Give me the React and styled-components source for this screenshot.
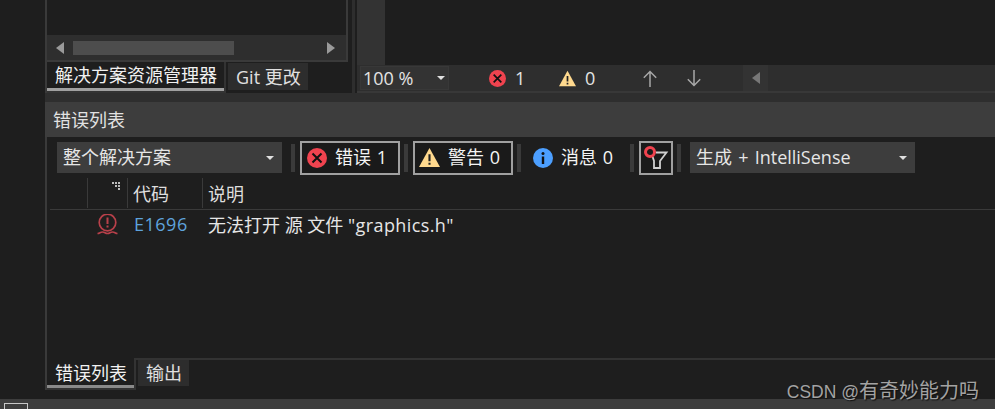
import React from "react";
import styled, { createGlobalStyle } from "styled-components";

const FONT = `"Open Sans", "Noto Sans CJK SC", sans-serif`;

const GlobalStyle = createGlobalStyle`
  html, body { margin: 0; padding: 0; background: #1e1e1e; overflow: hidden; }
  body { font-family: ${FONT}; font-size: 18px; color: #e4e4e4; }
`;

const Page = styled.div`
  position: relative;
  width: 995px;
  height: 409px;
  display: flex;
  flex-direction: column;
  overflow: hidden;
`;

const Workspace = styled.div`
  display: flex;
  flex-direction: column;
  height: 399px;
  margin-left: 45px;
`;

const TopArea = styled.div`
  display: flex;
  height: 93px;
  background: #1e1e1e;
  border-left: 2px solid #3a3a3a;
`;

const ExplorerColumn = styled.div`
  width: 305px;
  display: flex;
  flex-direction: column;
`;

const ExplorerPane = styled.div`
  height: 62px;
  width: 301px;
  box-sizing: border-box;
  border-right: 2px solid #3a3a3a;
  border-bottom: 2px solid #3a3a3a;
  display: flex;
  flex-direction: column;
  justify-content: flex-end;
`;

const HScroll = styled.div`
  height: 25px;
  background: #2e2e2e;
  display: flex;
  align-items: center;
  padding: 0 11px 0 9px;
  gap: 9px;
`;

const Thumb = styled.div`
  width: 161px;
  height: 14px;
  background: #4d4d4d;
`;

const Spacer = styled.div`
  flex: 1;
`;

const ArrowLeft = styled.div`
  width: 0;
  height: 0;
  border-top: 6.5px solid transparent;
  border-bottom: 6.5px solid transparent;
  border-right: 8px solid ${p => p.color || "#9a9a9a"};
`;

const ArrowRight = styled.div`
  width: 0;
  height: 0;
  border-top: 6.5px solid transparent;
  border-bottom: 6.5px solid transparent;
  border-left: 8px solid #9a9a9a;
`;

const TabRow = styled.div`
  height: ${p => p.height}px;
  display: flex;
  align-items: flex-start;
`;

const TabBox = styled.div`
  width: ${p => p.width}px;
  height: 100%;
  box-sizing: border-box;
  border-right: 2px solid #333333;
  border-bottom: 2px solid #333333;
`;

const ActiveTab = styled.div`
  height: ${p => p.height}px;
  box-sizing: border-box;
  border-bottom: 3px solid ${p => p.line};
  padding: ${p => p.top}px 0 0 8px;
  line-height: 25px;
  color: #f1f1f1;
  white-space: nowrap;
`;

const IdleTab = styled.div`
  margin: ${p => p.top}px 0 0 ${p => p.left}px;
  height: ${p => p.height}px;
  padding: 0 ${p => p.pad}px 0 8px;
  background: #2d2d2d;
  line-height: ${p => p.height + 1}px;
  color: #e0e0e0;
  white-space: nowrap;
`;

const Splitter = styled.div`
  width: 3px;
  background: #2e2e2e;
  margin-right: 2px;
`;

const EditorColumn = styled.div`
  flex: 1;
  display: flex;
  flex-direction: column;
  background: #2e2e2e;
`;

const EditorBody = styled.div`
  height: 65px;
  display: flex;
`;

const Margin = styled.div`
  width: 28px;
  background: #333333;
`;

const Code = styled.div`
  flex: 1;
  background: #1e1e1e;
`;

const EditorStatus = styled.div`
  height: 28px;
  box-sizing: border-box;
  display: flex;
  align-items: center;
  background: #2e2e2e;
  border-bottom: 2px solid #383838;
`;

const ZoomBox = styled.div`
  width: 89px;
  height: 24px;
  margin: 0 40px 0 3px;
  box-sizing: border-box;
  border: 1px solid #383838;
  background: #333333;
  display: flex;
  align-items: center;
  justify-content: space-between;
  padding: 0 3px 0 2px;
  font-size: 18px;
`;

const Caret = styled.div`
  width: 0;
  height: 0;
  border-left: 4.5px solid transparent;
  border-right: 4.5px solid transparent;
  border-top: 4.5px solid #e0e0e0;
`;

const Counter = styled.div`
  width: ${p => p.width}px;
  display: flex;
  align-items: center;
  gap: 9px;
  font-size: 18px;
`;

const ArrowSlot = styled.div`
  width: ${p => p.width}px;
  display: flex;
  align-items: center;
`;

const ScrollEnd = styled.div`
  width: 25px;
  height: 26px;
  background: #333333;
  display: flex;
  align-items: center;
  justify-content: center;
`;

const Band = styled.div`
  height: 9px;
  background: #2e2e2e;
`;

const PanelHead = styled.div`
  height: 35px;
  box-sizing: border-box;
  background: #3d3d3d;
  padding: 2px 0 0 8px;
  line-height: 33px;
  color: #e2e2e2;
`;

const PanelBody = styled.div`
  height: 253px;
  box-sizing: border-box;
  border-left: 2px solid #3a3a3a;
  display: flex;
  flex-direction: column;
`;

const Toolbar = styled.div`
  height: 41px;
  display: flex;
  align-items: center;
  padding-left: 10px;
`;

const Combo = styled.div`
  width: 225px;
  height: 31px;
  box-sizing: border-box;
  background: #3d3d3d;
  display: flex;
  align-items: center;
  justify-content: space-between;
  padding: 0 7px 3px 6px;
  color: #e6e6e6;
  white-space: nowrap;
  word-spacing: 1.5px;
`;

const ComboCaret = styled(Caret)`
  margin: 3px 1px 0 0;
`;

const Sep = styled.div`
  width: 4px;
  height: 28px;
  margin: 0 ${p => p.right}px 0 ${p => p.left}px;
  background: #3a3a3a;
`;

const FilterButton = styled.div`
  width: ${p => p.width}px;
  height: 34px;
  box-sizing: border-box;
  border: 2px solid ${p => (p.on ? "#a0a0a0" : "transparent")};
  background: ${p => (p.on ? "#1a1a1a" : "transparent")};
  display: flex;
  align-items: center;
  gap: 8px;
  padding-left: ${p => p.lead}px;
  color: #f4f4f4;
  white-space: nowrap;
`;

const ButtonLabel = styled.span`
  margin-top: -3px;
  word-spacing: 1px;
`;

const TableHead = styled.div`
  height: 32px;
  box-sizing: border-box;
  margin-left: 3px;
  display: flex;
  border-bottom: 1px solid #3a3a3a;
`;

const HeadCell = styled.div`
  width: ${p => p.width}px;
  height: 30px;
  flex: ${p => (p.grow ? 1 : "none")};
  box-sizing: border-box;
  border-left: ${p => (p.first ? "none" : "1px solid #3a3a3a")};
  padding-left: 5px;
  line-height: 32px;
  color: #dedede;
  position: relative;
`;

const SortGrip = styled.svg`
  position: absolute;
  right: 5px;
  top: 4px;
`;

const Row = styled.div`
  height: 29px;
  margin-left: 3px;
  display: flex;
  align-items: center;
`;

const RowIcon = styled.div`
  width: 84px;
  display: flex;
  padding-left: 47px;
  box-sizing: border-box;
`;

const RowCode = styled.div`
  width: 74px;
  margin-top: -2px;
  color: #5ea3dc;
  letter-spacing: 0.5px;
`;

const RowText = styled.div`
  margin-top: -2px;
  color: #e6e6e6;
  white-space: nowrap;
`;

const FileName = styled.span`
  letter-spacing: 0.4px;
`;

const BottomTabs = styled(TabRow)`
  margin-top: auto;
`;

const BottomRest = styled.div`
  flex: 1;
  height: 100%;
  margin-left: -2px;
  display: flex;
  align-items: flex-start;
  border-top: 2px solid #333333;
`;

const StatusBar = styled.div`
  height: 10px;
  background: #3d3d3d;
  padding-left: 4px;
`;

const StatusBox = styled.div`
  width: 24px;
  height: 6px;
  margin-top: 4px;
  box-sizing: border-box;
  border: 1px solid #c8c8c8;
  border-bottom: none;
`;

const Watermark = styled.div`
  position: absolute;
  right: 16px;
  top: 375px;
  font-family: "Liberation Sans", "Noto Sans CJK SC", sans-serif;
  font-size: 17.5px;
  color: #a3a3a3;
  text-shadow: 1px 1px 1px #111;
  white-space: nowrap;
`;

const WatermarkName = styled.span`
  font-size: 20px;
`;

const ErrorDot = ({ size = 20 }) => (
  <svg width={size} height={size} viewBox="0 0 20 20">
    <circle cx="10" cy="10" r="10" fill="#f0434f" />
    <path d="M5.500 5.500l9 9M14.500 5.500l-9 9" stroke="#111" strokeWidth="2" />
  </svg>
);

const WarnIcon = ({ size = 21 }) => (
  <svg width={size} height={size} viewBox="0 0 20 20">
    <path d="M10 1L20 19H0z" fill="#ffd98e" />
    <path d="M10 7v6.500M10 15v2" stroke="#222" strokeWidth="2" />
  </svg>
);

const InfoIcon = () => (
  <svg width="20" height="20" viewBox="0 0 20 20">
    <circle cx="10" cy="10" r="10" fill="#4c9fff" />
    <circle cx="10" cy="5.600" r="1.500" fill="#111" />
    <path d="M10 8.500v7.500" stroke="#111" strokeWidth="2.400" />
  </svg>
);

const FunnelIcon = () => (
  <svg width="30" height="30" viewBox="0 0 30 30">
    <path d="M15 9.500H25.500L19 18V25H13V18L11.500 13.500" fill="none" stroke="#d0d0d0" strokeWidth="1.800" />
    <circle cx="9" cy="9" r="4.500" fill="#1a1a1a" stroke="#f0434f" strokeWidth="3" />
  </svg>
);

const UpArrow = () => (
  <svg width="14" height="17" viewBox="0 0 14 17">
    <path d="M7 17V1.500M.8 7.700L7 1.500l6.200 6.200" fill="none" stroke="#a8a8a8" strokeWidth="1.500" />
  </svg>
);

const DownArrow = () => (
  <svg width="14" height="17" viewBox="0 0 14 17">
    <path d="M7 0v15.500M.8 9.300L7 15.500l6.200-6.200" fill="none" stroke="#a8a8a8" strokeWidth="1.500" />
  </svg>
);

const RowError = () => (
  <svg width="21" height="21" viewBox="0 0 21 21">
    <circle cx="10.500" cy="8.500" r="8.300" fill="none" stroke="#b8404a" strokeWidth="1.700" />
    <path d="M10.500 3.500v6.500M10.500 11.500v2" stroke="#b8404a" strokeWidth="2" />
    <path d="M.5 19.500c2.500 0 2.500-1.500 5-1.500s2.500 1.500 5 1.500 2.500-1.500 5-1.500 2.500 1.500 5 1.500" fill="none" stroke="#b8404a" strokeWidth="1.600" />
  </svg>
);

const Grip = () => (
  <SortGrip width="10" height="10" viewBox="0 0 10 10">
    {[[0, 0], [3, 0], [6, 0], [3, 3], [6, 3], [6, 6]].map(([x, y]) => (
      <rect key={`${x}-${y}`} x={x} y={y} width="2" height="2" fill="#bdbdbd" />
    ))}
  </SortGrip>
);

export default function App() {
  return (
    <Page>
      <GlobalStyle />
      <Workspace>
        <TopArea>
          <ExplorerColumn>
            <ExplorerPane>
              <HScroll>
                <ArrowLeft />
                <Thumb />
                <Spacer />
                <ArrowRight />
              </HScroll>
            </ExplorerPane>
            <TabRow height={31}>
              <TabBox width={179}>
                <ActiveTab height={29} top={1} line="#a0a0a0">解决方案资源管理器</ActiveTab>
              </TabBox>
              <IdleTab top={1} left={2} height={27} pad={7}>Git 更改</IdleTab>
            </TabRow>
          </ExplorerColumn>
          <Splitter />
          <EditorColumn>
            <EditorBody>
              <Margin />
              <Code />
            </EditorBody>
            <EditorStatus>
              <ZoomBox>100 %<Caret /></ZoomBox>
              <Counter width={70}><ErrorDot size={17} />1</Counter>
              <Counter width={84}><WarnIcon size={17} />0</Counter>
              <ArrowSlot width={44}><UpArrow /></ArrowSlot>
              <ArrowSlot width={56}><DownArrow /></ArrowSlot>
              <ScrollEnd><ArrowLeft color="#777" /></ScrollEnd>
            </EditorStatus>
          </EditorColumn>
        </TopArea>
        <Band />
        <PanelHead>错误列表</PanelHead>
        <PanelBody>
          <Toolbar>
            <Combo>整个解决方案<ComboCaret /></Combo>
            <Sep left={9} right={5} />
            <FilterButton on="1" width={100} lead={5}><ErrorDot /><ButtonLabel>错误 1</ButtonLabel></FilterButton>
            <Sep left={4} right={5} />
            <FilterButton on="1" width={100} lead={4}><WarnIcon /><ButtonLabel>警告 0</ButtonLabel></FilterButton>
            <Sep left={4} right={0} />
            <FilterButton width={105} lead={10}><InfoIcon /><ButtonLabel>消息 0</ButtonLabel></FilterButton>
            <Sep left={4} right={5} />
            <FilterButton on="1" width={34} lead={0}><FunnelIcon /></FilterButton>
            <Sep left={4} right={9} />
            <Combo>生成 + IntelliSense<ComboCaret /></Combo>
          </Toolbar>
          <TableHead>
            <HeadCell first width={37} />
            <HeadCell width={40}><Grip /></HeadCell>
            <HeadCell width={75}>代码</HeadCell>
            <HeadCell grow>说明</HeadCell>
          </TableHead>
          <Row>
            <RowIcon><RowError /></RowIcon>
            <RowCode>E1696</RowCode>
            <RowText>无法打开 源 文件 <FileName>"graphics.h"</FileName></RowText>
          </Row>
          <BottomTabs height={32}>
            <TabBox width={89}>
              <ActiveTab height={30} top={3} line="#8a8a8a">错误列表</ActiveTab>
            </TabBox>
            <BottomRest>
              <IdleTab top={0} left={4} height={26} pad={7}>输出</IdleTab>
            </BottomRest>
          </BottomTabs>
        </PanelBody>
      </Workspace>
      <StatusBar><StatusBox /></StatusBar>
      <Watermark>CSDN @<WatermarkName>有奇妙能力吗</WatermarkName></Watermark>
    </Page>
  );
}
